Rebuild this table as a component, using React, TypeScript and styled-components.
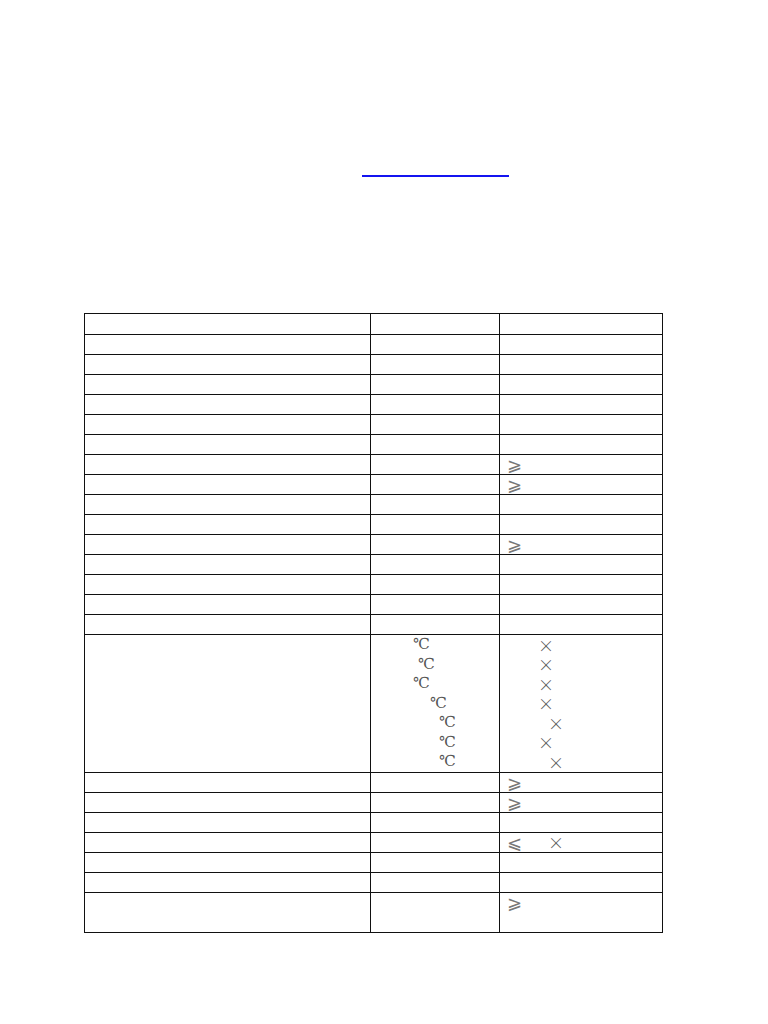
import React from "react";
import styled, { createGlobalStyle } from "styled-components";

const GlobalStyle = createGlobalStyle`
  html, body {
    margin: 0;
    padding: 0;
    background: #ffffff;
  }
  body {
    font-family: "Noto Sans CJK SC", "DejaVu Sans", sans-serif;
    color: #333;
  }
`;

const Page = styled.div`
  width: 768px;
  height: 1024px;
  padding-top: 158px;
  box-sizing: border-box;
`;

const TitleLine = styled.div`
  padding-left: 362px;
  height: 155px;
`;

const LinkBlank = styled.span`
  display: inline-block;
  width: 147px;
  height: 17px;
  border-bottom: 2px solid #1414f0;
`;

const Sheet = styled.table`
  margin-left: 84px;
  width: 578px;
  border-collapse: collapse;
  table-layout: fixed;
`;

const Row = styled.tr<{ h: number }>`
  height: ${(p) => p.h}px;
`;

const Cell = styled.td`
  border: 1.5px solid #111;
  padding: 0 0 0 7px;
  font-size: 15px;
  line-height: 16px;
  color: #555;
  vertical-align: middle;
  box-sizing: border-box;
`;

const TopCell = styled(Cell)`
  vertical-align: top;
  padding-top: 0;
`;

const Line = styled.div<{ indent: number }>`
  height: 19.5px;
  display: flex;
  align-items: center;
  padding-left: ${(p) => p.indent}px;
  white-space: pre;
`;

const Sym = styled.span`
  display: inline-block;
  line-height: 1;
  font-family: "Noto Sans CJK SC", "DejaVu Sans", sans-serif;
  font-weight: 300;
  font-size: 16px;
  color: #555;
`;

const Deg = styled.span`
  display: inline-block;
  line-height: 1;
  font-family: "DejaVu Serif", "Noto Sans CJK SC", serif;
  font-size: 15px;
  color: #555;
`;

const Ge = styled.span`
  display: inline-block;
  line-height: 1;
  font-family: "DejaVu Sans", sans-serif;
  font-size: 18px;
  color: #777;
`;

type R = { h: number; c3?: React.ReactNode };

const GE = <Ge>⩾</Ge>;

const rowsTop: R[] = [
  { h: 21 },
  { h: 20 },
  { h: 20 },
  { h: 20 },
  { h: 20 },
  { h: 20 },
  { h: 20 },
  { h: 20, c3: GE },
  { h: 20, c3: GE },
  { h: 20 },
  { h: 20 },
  { h: 20, c3: GE },
  { h: 20 },
  { h: 20 },
  { h: 20 },
  { h: 20 },
];

const tempLines = [
  { a: 36, b: 38 },
  { a: 41, b: 38 },
  { a: 36, b: 38 },
  { a: 53, b: 38 },
  { a: 62, b: 48 },
  { a: 62, b: 38 },
  { a: 62, b: 48 },
];

const rowsBottom: R[] = [
  { h: 20, c3: GE },
  { h: 20, c3: GE },
  { h: 20 },
  {
    h: 20,
    c3: (
      <>
        <Ge>⩽</Ge>
        <Sym style={{ marginLeft: 26 }}>×</Sym>
      </>
    ),
  },
  { h: 20 },
  { h: 20 },
];

export default function App() {
  return (
    <>
      <GlobalStyle />
      <Page>
        <TitleLine>
          <LinkBlank>{"\u00a0"}</LinkBlank>
        </TitleLine>
        <Sheet>
          <colgroup>
            <col style={{ width: 286 }} />
            <col style={{ width: 129 }} />
            <col style={{ width: 163 }} />
          </colgroup>
          <tbody>
            {rowsTop.map((r, i) => (
              <Row key={i} h={r.h}>
                <Cell />
                <Cell />
                <Cell>{r.c3}</Cell>
              </Row>
            ))}
            <Row h={138}>
              <Cell />
              <TopCell style={{ paddingLeft: 6 }}>
                {tempLines.map((t, i) => (
                  <Line key={i} indent={t.a}>
                    <Deg>℃</Deg>
                  </Line>
                ))}
              </TopCell>
              <TopCell style={{ paddingLeft: 0 }}>
                {tempLines.map((t, i) => (
                  <Line key={i} indent={t.b}>
                    <Sym>×</Sym>
                  </Line>
                ))}
              </TopCell>
            </Row>
            {rowsBottom.map((r, i) => (
              <Row key={i} h={r.h}>
                <Cell />
                <Cell />
                <Cell>{r.c3}</Cell>
              </Row>
            ))}
            <Row h={40}>
              <Cell />
              <Cell />
              <TopCell style={{ paddingTop: 1 }}>{GE}</TopCell>
            </Row>
          </tbody>
        </Sheet>
      </Page>
    </>
  );
}
